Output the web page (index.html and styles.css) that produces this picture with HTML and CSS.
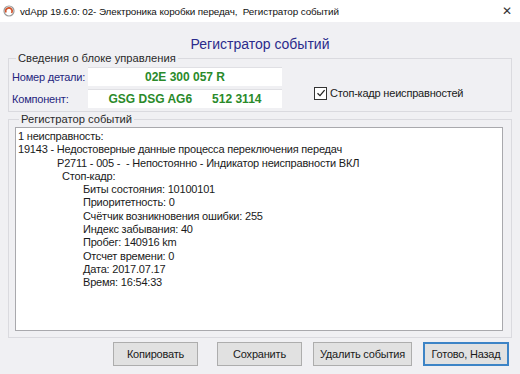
FILE: index.html
```html
<!DOCTYPE html>
<html lang="ru">
<head>
<meta charset="utf-8">
<link rel="stylesheet" href="styles.css">
</head>
<body>
<div class="window">
  <div class="titlebar">
    <svg class="appicon" width="12" height="12" viewBox="0 0 12 12">
      <circle cx="6" cy="6" r="5" fill="none" stroke="#9a9a9a" stroke-width="1.2"/>
      <path d="M3 7.5 A3.2 3.2 0 1 1 8.5 8" fill="none" stroke="#d2522a" stroke-width="1.6"/>
    </svg>
    <span class="title">vdApp 19.6.0: 02- Электроника коробки передач,&nbsp; Регистратор событий</span>
    <span class="close">✕</span>
  </div>
  <div class="content">
    <div class="heading">Регистратор событий</div>
    <fieldset class="group info">
      <legend>Сведения о блоке управления</legend>
      <div class="info-row">
        <div class="fields">
          <div class="row"><span class="lbl">Номер детали:</span><div class="field">02E 300 057 R</div></div>
          <div class="row"><span class="lbl">Компонент:</span><div class="field">GSG DSG AG6&nbsp;&nbsp;&nbsp;&nbsp;&nbsp;&nbsp;512 3114</div></div>
        </div>
        <div class="check">
          <span class="box"><svg width="10" height="10" viewBox="0 0 10 10"><path d="M1.5 5.2 L4 7.6 L8.6 2.2" fill="none" stroke="#222" stroke-width="1.3"/></svg></span>
          <span>Стоп-кадр неисправностей</span>
        </div>
      </div>
    </fieldset>
    <fieldset class="group log">
      <legend>Регистратор событий</legend>
      <div class="logbox">
        <div>1 неисправность:</div>
        <div>19143 - Недостоверные данные процесса переключения передач</div>
        <div class="i1">P2711 - 005 - &nbsp;- Непостоянно - Индикатор неисправности ВКЛ</div>
        <div class="i2">Стоп-кадр:</div>
        <div class="i3">Биты состояния: 10100101</div>
        <div class="i3">Приоритетность: 0</div>
        <div class="i3">Счётчик возникновения ошибки: 255</div>
        <div class="i3">Индекс забывания: 40</div>
        <div class="i3">Пробег: 140916 km</div>
        <div class="i3">Отсчет времени: 0</div>
        <div class="i3">Дата: 2017.07.17</div>
        <div class="i3">Время: 16:54:33</div>
      </div>
    </fieldset>
    <div class="buttons">
      <button class="btn copy">Копировать</button>
      <button class="btn save">Сохранить</button>
      <button class="btn del">Удалить события</button>
      <button class="btn done">Готово, Назад</button>
    </div>
  </div>
</div>
</body>
</html>
```
FILE: styles.css
```css
html, body {
  margin: 0;
  padding: 0;
}
body {
  width: 520px;
  height: 374px;
  overflow: hidden;
  background: #f0f0f3;
  font-family: "Liberation Sans", Arial, sans-serif;
  font-size: 11px;
  letter-spacing: -0.2px;
  color: #1a1a1a;
}
.window {
  display: flex;
  flex-direction: column;
  height: 374px;
}
.titlebar {
  height: 22px;
  background: #ffffff;
  display: flex;
  align-items: center;
  padding: 0 8px 0 3px;
  box-sizing: border-box;
}
.appicon {
  margin-right: 5px;
  flex: none;
}
.title {
  font-size: 9.9px;
  letter-spacing: -0.1px;
  color: #111;
  flex: 1;
  white-space: nowrap;
}
.close {
  font-size: 12px;
  color: #333;
}
.content {
  padding: 0 8px;
  display: flex;
  flex-direction: column;
}
.heading {
  padding-top: 15px;
  line-height: 15px;
  height: 15px;
  text-align: center;
  font-size: 14px;
  letter-spacing: 0;
  color: #2b2b8c;
}
.group {
  margin: 0;
  border: 1px solid #dadadf;
  min-width: 0;
}
.group legend {
  padding: 0 2px;
  margin-left: 4px;
  line-height: 13px;
  font-size: 11.2px;
  letter-spacing: 0;
  color: #2a2a2a;
}
.info {
  padding: 2px 4px 3px 3px;
}
.info-row {
  display: flex;
}
.fields {
  display: flex;
  flex-direction: column;
  gap: 3px;
}
.row {
  display: flex;
  align-items: center;
}
.lbl {
  width: 76px;
  color: #25257e;
}
.field {
  width: 194px;
  height: 19px;
  box-sizing: border-box;
  background: #fff;
  border-top: 1px solid #e0e0e4;
  text-align: center;
  line-height: 18px;
  font-weight: bold;
  font-size: 12px;
  letter-spacing: 0;
  color: #2a8a2a;
  white-space: pre;
}
.check {
  display: flex;
  align-items: center;
  margin-left: 32px;
  margin-top: 20px;
  gap: 3px;
  color: #1a1a1a;
  height: 12px;
}
.box {
  width: 11px;
  height: 11px;
  border: 1px solid #333;
  background: #fff;
  display: flex;
  align-items: center;
  justify-content: center;
}
.log {
  margin-top: 1px;
  padding: 1px 8px 6px 6px;
}
.logbox {
  height: 204px;
  box-sizing: border-box;
  background: #fff;
  border: 1px solid #a9a9ad;
  padding: 2px 2px;
  line-height: 13.3px;
  color: #1a1a1a;
  white-space: nowrap;
}
.i1 { padding-left: 39px; }
.i2 { padding-left: 44px; }
.i3 { padding-left: 65px; }
.buttons {
  display: flex;
  justify-content: flex-end;
  gap: 11px;
  margin-top: 4px;
  padding-right: 3px;
}
.btn {
  height: 24px;
  box-sizing: border-box;
  background: #e1e1e1;
  border: 1px solid #adadad;
  font-family: "Liberation Sans", Arial, sans-serif;
  font-size: 11px;
  letter-spacing: -0.2px;
  color: #1a1a1a;
  padding: 0;
}
.copy { width: 85px; margin-right: 8px; }
.save { width: 85px; }
.del { width: 99px; }
.done {
  width: 86px;
  border: 2px solid #3d84c6;
}
```
